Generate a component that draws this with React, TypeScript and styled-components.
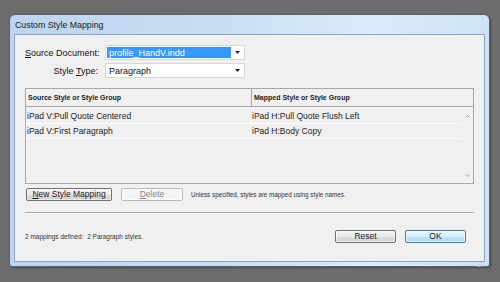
import React from 'react';
import styled, { createGlobalStyle } from 'styled-components';

const GlobalStyle = createGlobalStyle`
  html, body {
    margin: 0;
    padding: 0;
    width: 500px;
    height: 282px;
    overflow: hidden;
    background: #6c6c6c;
    font-family: 'Liberation Sans', Arial, sans-serif;
  }
`;

const Screen = styled.div`
  width: 500px;
  height: 282px;
  box-sizing: border-box;
  padding: 14px 0 0 9px;
  background: #6c6c6c;
`;

const Window = styled.div`
  width: 481px;
  height: 253px;
  box-sizing: border-box;
  display: flex;
  flex-direction: column;
  padding: 0 4px 4px 4px;
  border: 1px solid #59626c;
  border-radius: 6px 6px 3px 3px;
  background: linear-gradient(90deg, #bcd5ee 0%, #c9def4 45%, #dcebfb 75%, #cfe2f6 100%);
  box-shadow: 1px 1px 2px rgba(0, 0, 0, 0.35);
`;

const TitleBar = styled.div`
  height: 19px;
  display: flex;
  align-items: center;
  padding-left: 1px;
  font-size: 8.8px;
  color: #1a1a1a;
`;

const Client = styled.div`
  position: relative;
  flex: 1;
  display: flex;
  flex-direction: column;
  padding: 10px 10px 0 10px;
  background: #f0f0f0;
  border: 1px solid #8ea4bc;
`;

const FormGrid = styled.div`
  display: grid;
  grid-template-columns: 73px 140px;
  column-gap: 7px;
  row-gap: 3px;
  align-items: center;
`;

const Label = styled.div`
  text-align: right;
  font-size: 9px;
  color: #111;
  white-space: nowrap;
`;

const Select = styled.div`
  height: 15px;
  box-sizing: border-box;
  display: flex;
  align-items: center;
  padding: 1px;
  background: #ffffff;
  border: 1px solid #d8d8d8;
`;

const SelectValue = styled.div<{ $selected?: boolean }>`
  flex: 1;
  height: 100%;
  display: flex;
  align-items: center;
  padding-left: 2px;
  font-size: 9px;
  color: ${p => (p.$selected ? '#ffffff' : '#111')};
  background: ${p => (p.$selected ? '#3399ff' : 'transparent')};
`;

const SelectArrow = styled.div`
  width: 12px;
  display: flex;
  align-items: center;
  justify-content: center;
`;

const Table = styled.div`
  margin-top: 10px;
  height: 96px;
  box-sizing: border-box;
  display: flex;
  flex-direction: column;
  border: 1px solid #a9a9a9;
`;

const HeaderRow = styled.div`
  height: 17px;
  flex-shrink: 0;
  display: grid;
  grid-template-columns: 225px 1fr;
  border-bottom: 1px solid #a9a9a9;
`;

const HeaderCell = styled.div<{ $divider?: boolean }>`
  display: flex;
  align-items: center;
  padding-left: 2px;
  font-size: 7px;
  font-weight: bold;
  color: #222;
  border-left: ${p => (p.$divider ? '1px solid #a9a9a9' : 'none')};
`;

const ListArea = styled.div`
  flex: 1;
  display: flex;
`;

const Rows = styled.div`
  flex: 1;
  padding-top: 2px;
`;

const Row = styled.div`
  height: 14px;
  display: grid;
  grid-template-columns: 225px 1fr;
  border-bottom: 1px solid #fcfcfc;
`;

const Cell = styled.div`
  display: flex;
  align-items: center;
  padding-left: 1px;
  font-size: 8.5px;
  color: #222;
  white-space: nowrap;
`;

const ScrollBar = styled.div`
  width: 11px;
  display: flex;
  flex-direction: column;
  justify-content: space-between;
  align-items: center;
  padding: 8px 0 6px;
`;

const ButtonRow = styled.div`
  margin-top: 4px;
  display: flex;
  align-items: center;
  gap: 9px;
  padding-left: 1px;
`;

const Button = styled.button<{ $w: number; $default?: boolean }>`
  width: ${p => p.$w}px;
  height: 13px;
  padding: 0;
  box-sizing: border-box;
  font-family: 'Liberation Sans', Arial, sans-serif;
  font-size: 8.5px;
  line-height: 11px;
  color: #1a1a1a;
  border: 1px solid ${p => (p.$default ? '#3c7fb1' : '#707070')};
  border-radius: 2px;
  background: ${p =>
    p.$default
      ? 'linear-gradient(180deg, #eaf6fd 0%, #d9f0fc 50%, #bee6fd 51%, #a7d9f5 100%)'
      : 'linear-gradient(180deg, #f2f2f2 0%, #ebebeb 50%, #dddddd 51%, #cfcfcf 100%)'};
  box-shadow: inset 0 0 0 1px rgba(255, 255, 255, 0.6);

  &:disabled {
    color: #8a8a8a;
    border-color: #b5b9bc;
    background: #f4f4f4;
  }
`;

const Hint = styled.span`
  margin-left: -1px;
  font-size: 6.3px;
  color: #333;
`;

const Separator = styled.div`
  margin-top: 11px;
  height: 1px;
  background: #a6a6a6;
  border-bottom: 1px solid #ffffff;
`;

const Footer = styled.div`
  margin-top: 16px;
  display: flex;
  align-items: center;
  padding-right: 8px;
`;

const Status = styled.span`
  flex: 1;
  font-size: 6.5px;
  color: #333;
`;

const FooterButtons = styled.div`
  display: flex;
  gap: 9px;
`;

const Grip = styled.div`
  position: absolute;
  right: 1px;
  bottom: 1px;
  width: 6px;
  height: 6px;
`;

const U = styled.span`
  text-decoration: underline;
`;

const ArrowDown = () => (
  <svg width="5" height="3" viewBox="0 0 5 3">
    <path d="M0 0 H5 L2.5 3 Z" fill="#222" />
  </svg>
);

const Chevron = ({ up }: { up?: boolean }) => (
  <svg width="5" height="3" viewBox="0 0 5 3">
    <path d={up ? 'M0.5 2.5 L2.5 0.5 L4.5 2.5' : 'M0.5 0.5 L2.5 2.5 L4.5 0.5'} stroke="#a0a0a0" fill="none" strokeWidth="1" />
  </svg>
);

const mappings = [
  { source: 'iPad V:Pull Quote Centered', mapped: 'iPad H:Pull Quote Flush Left' },
  { source: 'iPad V:First Paragraph', mapped: 'iPad H:Body Copy' },
];

export default function App() {
  return (
    <>
      <GlobalStyle />
      <Screen>
        <Window>
          <TitleBar>Custom Style Mapping</TitleBar>
          <Client>
            <FormGrid>
              <Label>
                <U>S</U>ource Document:
              </Label>
              <Select>
                <SelectValue $selected>profile_HandV.indd</SelectValue>
                <SelectArrow>
                  <ArrowDown />
                </SelectArrow>
              </Select>
              <Label>
                Style <U>T</U>ype:
              </Label>
              <Select>
                <SelectValue>Paragraph</SelectValue>
                <SelectArrow>
                  <ArrowDown />
                </SelectArrow>
              </Select>
            </FormGrid>

            <Table>
              <HeaderRow>
                <HeaderCell>Source Style or Style Group</HeaderCell>
                <HeaderCell $divider>Mapped Style or Style Group</HeaderCell>
              </HeaderRow>
              <ListArea>
                <Rows>
                  {mappings.map(m => (
                    <Row key={m.source}>
                      <Cell>{m.source}</Cell>
                      <Cell>{m.mapped}</Cell>
                    </Row>
                  ))}
                </Rows>
                <ScrollBar>
                  <Chevron up />
                  <Chevron />
                </ScrollBar>
              </ListArea>
            </Table>

            <ButtonRow>
              <Button $w={86}>
                <U>N</U>ew Style Mapping
              </Button>
              <Button $w={62} disabled>
                <U>D</U>elete
              </Button>
              <Hint>Unless specified, styles are mapped using style names.</Hint>
            </ButtonRow>

            <Separator />

            <Footer>
              <Status>2 mappings defined:&nbsp; 2 Paragraph styles.</Status>
              <FooterButtons>
                <Button $w={61}>Reset</Button>
                <Button $w={61} $default>
                  OK
                </Button>
              </FooterButtons>
            </Footer>

            <Grip>
              <svg width="6" height="6" viewBox="0 0 6 6">
                <rect x="4" y="0" width="1" height="1" fill="#b8b8b8" />
                <rect x="2" y="2" width="1" height="1" fill="#b8b8b8" />
                <rect x="4" y="2" width="1" height="1" fill="#b8b8b8" />
                <rect x="0" y="4" width="1" height="1" fill="#b8b8b8" />
                <rect x="2" y="4" width="1" height="1" fill="#b8b8b8" />
                <rect x="4" y="4" width="1" height="1" fill="#b8b8b8" />
              </svg>
            </Grip>
          </Client>
        </Window>
      </Screen>
    </>
  );
}
